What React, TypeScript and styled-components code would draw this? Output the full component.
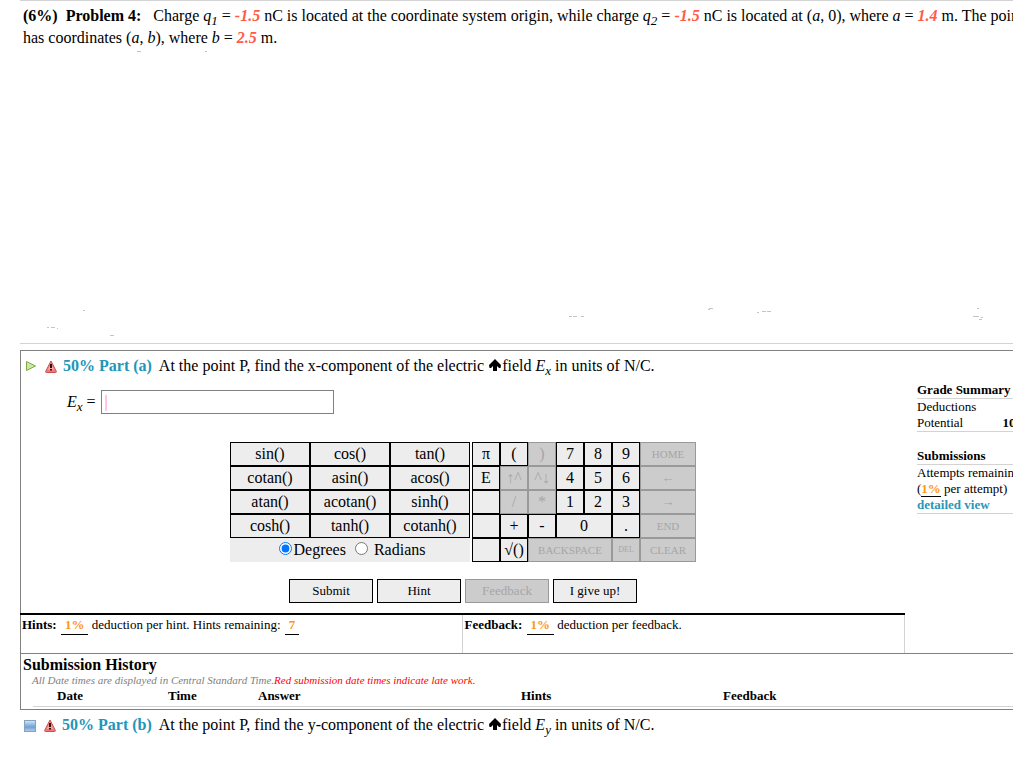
import React from "react";
import styled, { createGlobalStyle, css } from "styled-components";

const GlobalStyle = createGlobalStyle`
  * { box-sizing: border-box; }
  body {
    margin: 0;
    background: #fff;
    color: #000;
    font-family: "Liberation Serif", "Times New Roman", serif;
    font-size: 16px;
  }
  button, input { font-family: inherit; color: inherit; }
  sub { font-size: 13px; line-height: 0; vertical-align: -4px; }
`;

const Page = styled.main`
  padding-left: 20px;
  overflow: hidden;
  white-space: nowrap;
`;

const Statement = styled.p`
  margin: 0;
  padding: 4px 0 0 3px;
  border-top: 1px solid #d3d3d3;
  line-height: 22px;
`;

const Lead = styled.b`
  margin-right: 12px;
  span { margin-left: 8px; }
`;

const Value = styled.b`
  color: #ff5a46;
  font-style: italic;
`;

const Figure = styled.svg`
  display: block;
  width: 993px;
  height: 295px;
`;

const Part = styled.section`
  margin-top: 6px;
  border: solid #808080;
  border-width: 1px 0 1px 1px;
`;

const PartHeader = styled.h2`
  display: flex;
  align-items: center;
  margin: 0;
  padding-left: 4px;
  height: 30px;
  font-size: 16px;
  font-weight: normal;
  white-space: pre;
  b { color: #2196ba; margin: 0 7px 0 6px; }
  svg { flex: none; }
`;

const StatusIcon = styled.svg`
  width: 12px;
  height: 14px;
  margin-right: 8px;
`;

const Columns = styled.div`
  display: flex;
`;

const Work = styled.form`
  flex: 1 1 0;
  min-width: 0;
`;

const AnswerRow = styled.label`
  display: flex;
  align-items: center;
  gap: 5px;
  padding: 9px 0 0 46px;
  font-size: 16px;
`;

const AnswerInput = styled.input`
  width: 233px;
  height: 24px;
  padding: 1px 3px;
  border: 1px solid #808080;
  font-size: 16px;
  &::placeholder { color: #ff8c8c; opacity: 1; }
`;

const Keypad = styled.div`
  display: flex;
  justify-content: center;
  gap: 2px;
  margin-top: 28px;
`;

const FunctionKeys = styled.div`
  display: grid;
  grid-template-columns: repeat(3, 80px);
  grid-auto-rows: 24px;
  background: #ededed;
`;

const NumberKeys = styled.div`
  display: grid;
  grid-template-columns: repeat(6, 28px) 56px;
  grid-auto-rows: 24px;
`;

const buttonLook = css`
  padding: 0;
  border: 1px solid #000;
  border-radius: 0;
  background: #ededed;
  &:disabled {
    border-color: #999;
    background: #ccc;
    color: #a6a6a6;
  }
`;

const Key = styled.button<{ $span?: number; $size?: number }>`
  ${buttonLook}
  grid-column: span ${(p) => p.$span ?? 1};
  font-size: ${(p) => p.$size ?? 16}px;
  line-height: 20px;
`;

const AngleModes = styled.div`
  grid-column: span 3;
  display: flex;
  justify-content: center;
  align-items: center;
  gap: 9px;
  padding-left: 4px;
  label { display: flex; align-items: center; gap: 2px; }
  label + label { gap: 6px; }
  input { width: 13px; height: 13px; margin: 0 0 3px; }
`;

const Actions = styled.div`
  display: flex;
  justify-content: center;
  gap: 4px;
  padding: 17px 0 10px;
`;

const ActionButton = styled.button`
  ${buttonLook}
  width: 84px;
  height: 24px;
  font-size: 13px;
`;

const Deductions = styled.div`
  display: grid;
  grid-template-columns: 1fr 1fr;
  border-top: 2px solid #000;
  margin-left: -1px;
`;

const Deduction = styled.div`
  height: 38px;
  padding: 2px 0 0 2px;
  border-right: 1px solid #d3d3d3;
  font-size: 13px;
  line-height: 16px;
`;

const Amount = styled.b<{ $tight?: boolean }>`
  display: inline-block;
  height: ${(p) => (p.$tight ? 16 : 18)}px;
  margin-left: ${(p) => (p.$tight ? 0 : 1)}px;
  padding: 0 ${(p) => (p.$tight ? 0 : 4)}px;
  border-bottom: 1px solid #000;
  color: #ff9614;
`;

const Summary = styled.aside`
  flex: none;
  width: 108px;
  padding: 1px 0 0 12px;
  overflow: hidden;
  font-size: 13px;
  line-height: 16px;
`;

const SummaryGroup = styled.section`
  margin-bottom: 16px;
  border-bottom: 1px solid #d3d3d3;
  h3 {
    margin: 0;
    border-bottom: 1px solid #d3d3d3;
    font-size: 13px;
    line-height: 16px;
  }
  p { margin: 0; height: 16px; display: flex; }
  p > strong { margin-left: auto; margin-right: -22px; }
  a { color: #2b96b8; font-weight: bold; text-decoration: none; }
`;

const History = styled.section`
  padding: 2px 0;
  border-top: 1px solid #808080;
  h3 {
    margin: 0;
    padding-left: 2px;
    font-size: 16px;
    line-height: 18px;
  }
  p {
    margin: 0;
    padding-left: 11px;
    color: #808080;
    font-size: 11px;
    font-style: italic;
    line-height: 13px;
  }
  em { color: #f00; }
`;

const HistoryTable = styled.table`
  width: calc(100% - 12px);
  margin-left: 12px;
  table-layout: fixed;
  border-collapse: collapse;
  border-bottom: 1px solid #d3d3d3;
  th {
    padding: 1px 0 2px 24px;
    font-size: 13px;
    line-height: 16px;
    text-align: left;
  }
`;

const WarningIcon = () => (
  <svg width="12" height="13" viewBox="0 0 12 13" aria-hidden="true">
    <path d="M6 1 11.4 11.5Q11.5 12.5 10.5 12.5H1.5Q.5 12.5.6 11.5Z" fill="#f07878" stroke="#c85050" />
    <path d="M6 3 9.5 10H2.5Z" fill="#f5a09b" />
    <path d="M6 4v4M6 9v1.5" stroke="#331010" strokeWidth="2" />
  </svg>
);

const OpenIcon = () => (
  <StatusIcon viewBox="0 0 12 14" aria-hidden="true">
    <path d="M1.5 2.5 10.5 7 1.5 11.5Z" fill="#cde8a0" stroke="#7eaa4c" strokeLinejoin="round" />
  </StatusIcon>
);

const ClosedIcon = () => (
  <StatusIcon viewBox="0 0 12 14" aria-hidden="true">
    <defs>
      <linearGradient id="closed" x1="0" y1="0" x2="0" y2="1">
        <stop offset="0" stopColor="#d8e6f5" />
        <stop offset=".6" stopColor="#6f9fd4" />
        <stop offset="1" stopColor="#b8d2ee" />
      </linearGradient>
    </defs>
    <rect x=".5" y="2.5" width="11" height="11" fill="url(#closed)" stroke="#84a2c2" />
  </StatusIcon>
);

const UpArrow = () => (
  <svg width="14" height="14" viewBox="0 0 14 14" aria-hidden="true">
    <path d="M7 0 13 6 12.5 9H11L9 7V12H5V7L3 9H1.5L1 6Z" />
  </svg>
);

// Faint marks left around the figure area: x, y, width.
const specks = [
  [117, 2, 4], [185, 2, 2], [63, 261, 2], [27, 278, 2], [31, 278, 4], [37, 279, 1],
  [90, 286, 4], [549, 267, 3], [553, 267, 4], [561, 267, 3], [688, 260, 2],
  [689, 259, 4], [742, 262, 4], [747, 262, 4], [737, 263, 2], [957, 259, 2],
  [953, 267, 6], [961, 268, 2], [959, 270, 3],
];

const PartTitle = ({ letter, axis, open }: { letter: string; axis: string; open?: boolean }) => (
  <PartHeader>
    {open ? <OpenIcon /> : <ClosedIcon />}
    <WarningIcon />
    <b>50% Part ({letter})</b>
    <span>At the point P, find the {axis}-component of the electric </span>
    <UpArrow />
    <span>field <i>E<sub>{axis}</sub></i> in units of N/C.</span>
  </PartHeader>
);

const functions = [
  "sin()", "cos()", "tan()", "cotan()", "asin()", "acos()",
  "atan()", "acotan()", "sinh()", "cosh()", "tanh()", "cotanh()",
];

type KeySpec = { label: string; off?: boolean; span?: number; size?: number };
const keys: KeySpec[] = [
  { label: "π", size: 16 }, { label: "(" }, { label: ")", off: true },
  { label: "7" }, { label: "8" }, { label: "9" }, { label: "HOME", off: true, size: 11 },
  { label: "E" }, { label: "↑^", off: true }, { label: "^↓", off: true },
  { label: "4" }, { label: "5" }, { label: "6" }, { label: "←", off: true, size: 13 },
  { label: "" }, { label: "/", off: true }, { label: "*", off: true },
  { label: "1" }, { label: "2" }, { label: "3" }, { label: "→", off: true, size: 13 },
  { label: "" }, { label: "+" }, { label: "-" },
  { label: "0", span: 2 }, { label: "." }, { label: "END", off: true, size: 11 },
  { label: "" }, { label: "√()" }, { label: "BACKSPACE", off: true, span: 3, size: 11 },
  { label: "DEL", off: true, size: 8 }, { label: "CLEAR", off: true, size: 11 },
];

export default function App() {
  return (
    <Page>
      <GlobalStyle />
      <Statement>
        <Lead>(6%)<span>Problem 4:</span></Lead>
        Charge <i>q<sub>1</sub></i> = <Value>-1.5</Value> nC is located at the coordinate system
        origin, while charge <i>q<sub>2</sub></i> = <Value>-1.5</Value> nC is located at (<i>a</i>, 0),
        where <i>a</i> = <Value>1.4</Value> m. The point P
        <br />
        has coordinates (<i>a</i>, <i>b</i>), where <i>b</i> = <Value>2.5</Value> m.
      </Statement>
      <Figure viewBox="0 0 993 295" aria-hidden="true">
        {specks.map(([x, y, w], i) => (
          <rect key={i} x={x} y={y} width={w} height="1" fill="#c4c4c8" />
        ))}
        <rect y="294" width="993" height="1" fill="#d3d3d3" />
      </Figure>

      <Part>
        <PartTitle letter="a" axis="x" open />
        <Columns>
          <Work onSubmit={(e) => e.preventDefault()}>
            <AnswerRow>
              <span><i>E<sub>x</sub></i> =</span>
              <AnswerInput type="text" placeholder="|" />
            </AnswerRow>
            <Keypad>
              <FunctionKeys>
                {functions.map((f) => <Key type="button" key={f}>{f}</Key>)}
                <AngleModes>
                  <label><input type="radio" name="angle" defaultChecked />Degrees</label>
                  <label><input type="radio" name="angle" />Radians</label>
                </AngleModes>
              </FunctionKeys>
              <NumberKeys>
                {keys.map((k, i) => (
                  <Key type="button" key={i} disabled={k.off} $span={k.span} $size={k.size}>
                    {k.label}
                  </Key>
                ))}
              </NumberKeys>
            </Keypad>
            <Actions>
              <ActionButton type="submit">Submit</ActionButton>
              <ActionButton type="button">Hint</ActionButton>
              <ActionButton type="button" disabled>Feedback</ActionButton>
              <ActionButton type="button">I give up!</ActionButton>
            </Actions>
            <Deductions>
              <Deduction>
                <b>Hints:</b> <Amount>1%</Amount> deduction per hint. Hints remaining: <Amount>7</Amount>
              </Deduction>
              <Deduction>
                <b>Feedback:</b> <Amount>1%</Amount> deduction per feedback.
              </Deduction>
            </Deductions>
          </Work>
          <Summary>
            <SummaryGroup>
              <h3>Grade Summary</h3>
              <p>Deductions</p>
              <p>Potential <strong>100%</strong></p>
            </SummaryGroup>
            <SummaryGroup>
              <h3>Submissions</h3>
              <p>Attempts remaining:</p>
              <p>(<Amount $tight>1%</Amount>&nbsp;per attempt)</p>
              <p><a href="#details">detailed view</a></p>
            </SummaryGroup>
          </Summary>
        </Columns>
        <History>
          <h3>Submission History</h3>
          <p>All Date times are displayed in Central Standard Time.<em>Red submission date times indicate late work.</em></p>
          <HistoryTable>
            <colgroup>
              <col width="111" /><col width="90" /><col width="263" /><col width="202" /><col />
            </colgroup>
            <thead>
              <tr><th>Date</th><th>Time</th><th>Answer</th><th>Hints</th><th>Feedback</th></tr>
            </thead>
          </HistoryTable>
        </History>
      </Part>
      <PartTitle letter="b" axis="y" />
    </Page>
  );
}
